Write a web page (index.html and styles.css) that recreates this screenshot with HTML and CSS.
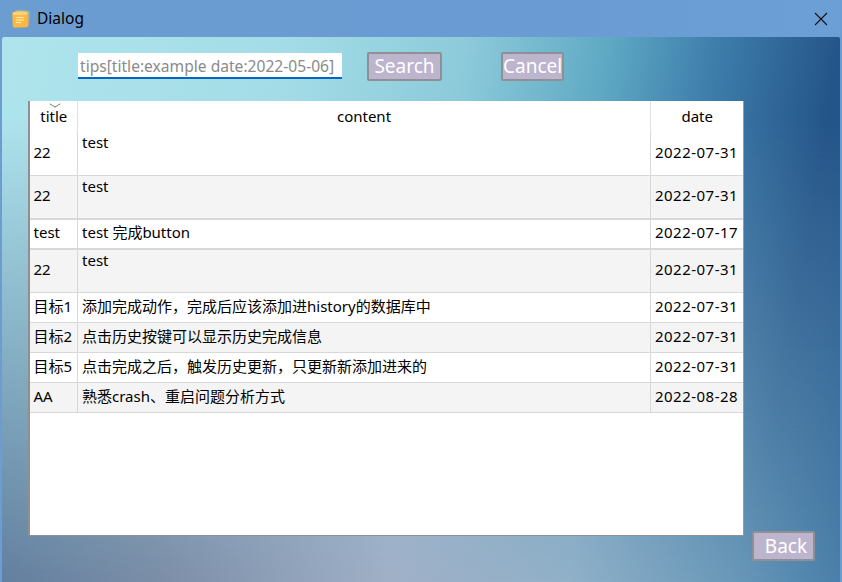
FILE: index.html
```html
<!DOCTYPE html>
<html lang="en">
<head>
<meta charset="utf-8">
<title>Dialog</title>
<link rel="stylesheet" href="styles.css">
</head>
<body>
<div class="window">
  <header class="titlebar">
    <svg class="app-icon" width="18" height="18" viewBox="0 0 18 18">
      <rect x="5" y="1" width="12.5" height="15" rx="1" fill="#dd8f9a" transform="rotate(4 10 9)"/>
      <rect x="3" y="0.5" width="13.5" height="16" rx="1" fill="#96c98f" transform="rotate(2 10 9)"/>
      <rect x="0.5" y="1.5" width="15" height="16" rx="2" fill="#fdb93f" transform="rotate(-2 8 9)"/>
      <path d="M1 2.5q7-1.5 14-.5v3H1z" fill="#fbd27a"/>
      <path d="M4 7.5h8M4 10h8M4 12.5h5" stroke="#ffeebd" stroke-width="1" fill="none"/>
    </svg>
    <span class="title">Dialog</span>
    <svg class="close" width="14" height="14" viewBox="0 0 14 14"><path d="M1 1l12 12M13 1L1 13" stroke="#111" stroke-width="1.1" fill="none"/></svg>
  </header>
  <main class="content">
    <div class="toolbar">
      <input class="search-input" type="text" placeholder="tips[title:example date:2022-05-06]">
      <button class="btn btn-search">Search</button>
      <button class="btn btn-cancel">Cancel</button>
    </div>
    <div class="main-row">
      <div class="table-panel">
        <table class="data">
          <colgroup><col class="col-title"><col class="col-content"><col class="col-date"></colgroup>
          <thead>
            <tr class="head"><th class="sorted">title</th><th>content</th><th>date</th></tr>
          </thead>
          <tbody>
            <tr class="tall first"><td>22</td><td class="top">test</td><td class="date">2022-07-31</td></tr>
            <tr class="tall tall-second alt thick"><td>22</td><td class="top">test</td><td class="date">2022-07-31</td></tr>
            <tr class="mid thick"><td>test</td><td>test 完成button</td><td class="date">2022-07-17</td></tr>
            <tr class="tall alt"><td>22</td><td class="top">test</td><td class="date">2022-07-31</td></tr>
            <tr class="short"><td>目标1</td><td>添加完成动作，完成后应该添加进history的数据库中</td><td class="date">2022-07-31</td></tr>
            <tr class="short alt"><td>目标2</td><td>点击历史按键可以显示历史完成信息</td><td class="date">2022-07-31</td></tr>
            <tr class="short"><td>目标5</td><td>点击完成之后，触发历史更新，只更新新添加进来的</td><td class="date">2022-07-31</td></tr>
            <tr class="short alt"><td>AA</td><td>熟悉crash、重启问题分析方式</td><td class="date">2022-08-28</td></tr>
          </tbody>
        </table>
      </div>
      <button class="btn btn-back">Back</button>
    </div>
  </main>
</div>
</body>
</html>
```

FILE: styles.css
```css
* { box-sizing: border-box; }
html, body { margin: 0; padding: 0; }
body {
  width: 842px;
  height: 582px;
  overflow: hidden;
  font-family: "Noto Sans", "Noto Sans CJK SC", sans-serif;
  color: #000;
  background: #6b9dd3;
}
.window { width: 842px; height: 582px; display: flex; flex-direction: column; background: #6b9dd3; }
.titlebar { height: 37px; flex: none; display: flex; align-items: center; padding: 0 14px 0 12px; background: linear-gradient(90deg, #6b9dd1, #6a9bd2 50%, #6b9fd6); }
.app-icon { flex: none; }
.title { margin-left: 7px; margin-top: -1px; font-size: 15.5px; }
.close { margin-left: auto; }
.content {
  position: relative;
  flex: 1;
  margin: 0 2px;
  padding: 15px 0 0 26px;
  border-radius: 2px 2px 0 0;
  background: linear-gradient(97deg, #587a9b 0%, #7c8ea8 25%, #a0b0c7 50%, #91b1c9 70%, #6a99b9 88%, #4a80aa 100%);
  overflow: hidden;
}
.content::before {
  content: "";
  position: absolute;
  inset: 0;
  background: linear-gradient(100deg, #afe4ec 0%, #a3dce7 31%, #8ccada 50%, #5fa9c4 65%, #3f80ad 76%, #245488 90%);
  -webkit-mask-image: linear-gradient(180deg, #000 0%, #000 15%, transparent 100%);
  mask-image: linear-gradient(180deg, #000 0%, #000 15%, transparent 100%);
}
.toolbar { position: relative; display: flex; align-items: flex-start; height: 29px; padding-left: 50px; }
.search-input {
  width: 264px;
  height: 26px;
  margin-top: 1px;
  padding: 1px 0 0 2px;
  border: 0;
  border-bottom: 2px solid #0067c0;
  border-radius: 0;
  background: #fff;
  outline: none;
  font: 15.6px "Noto Sans", sans-serif;
}
.search-input::placeholder { color: #8a8a8a; opacity: 1; }
.btn {
  height: 29px;
  padding: 0;
  border: 2px solid #8f8f96;
  border-radius: 2px;
  background: #bdb5ce;
  color: #fff;
  font: 19px/1 "Noto Sans", sans-serif;
}
.btn-search { width: 75px; margin-left: 25px; }
.btn-cancel { width: 63px; margin-left: 59px; }
.main-row { position: relative; display: flex; align-items: flex-end; margin-top: 20px; }
.table-panel {
  width: 716px;
  height: 435px;
  background: #fff;
  border-left: 2px solid #8f8f8f;
  border-right: 1px solid #9a9a9a;
  border-bottom: 1px solid #8f8f8f;
}
.btn-back { width: 63px; height: 30px; margin: 0 0 -25px 8px; padding-left: 5px; flex: none; }
.data { width: 713px; table-layout: fixed; border-collapse: collapse; font-size: 15px; }
.col-title { width: 47px; }
.col-date { width: 93px; }
.data th { height: 31px; padding: 0 0 1px 1px; font-weight: 400; text-align: center; border-right: 1px solid #e2e2e2; }
.data th:last-child { border-right: 0; }
.data td { padding: 0 3px 3px 3.5px; white-space: nowrap; overflow: hidden; border-right: 1px solid #d8d8d8; border-bottom: 1px solid #d8d8d8; }
.data td:last-child { border-right: 0; }
.data td.top { vertical-align: top; padding-top: 0; padding-left: 4.5px; line-height: 20px; }
.data td:nth-child(2) { padding-left: 4.5px; }
.data td.date { letter-spacing: .48px; padding-left: 4.5px; }
.sorted { position: relative; }
.sorted::after {
  content: "";
  position: absolute;
  left: 21px;
  top: 0;
  width: 7px;
  height: 7px;
  border-right: 1px solid #777;
  border-bottom: 1px solid #777;
  transform: translateY(-1px) scaleY(.6) rotate(45deg);
}
.tall td { height: 43px; }
.tall-second td { height: 44px; }
.mid td { height: 30px; padding-bottom: 5px; }
.short td { height: 30px; }
.alt td { background: #f4f4f4; }
.thick td { border-bottom: 2px solid #d8d8d8; }
```
